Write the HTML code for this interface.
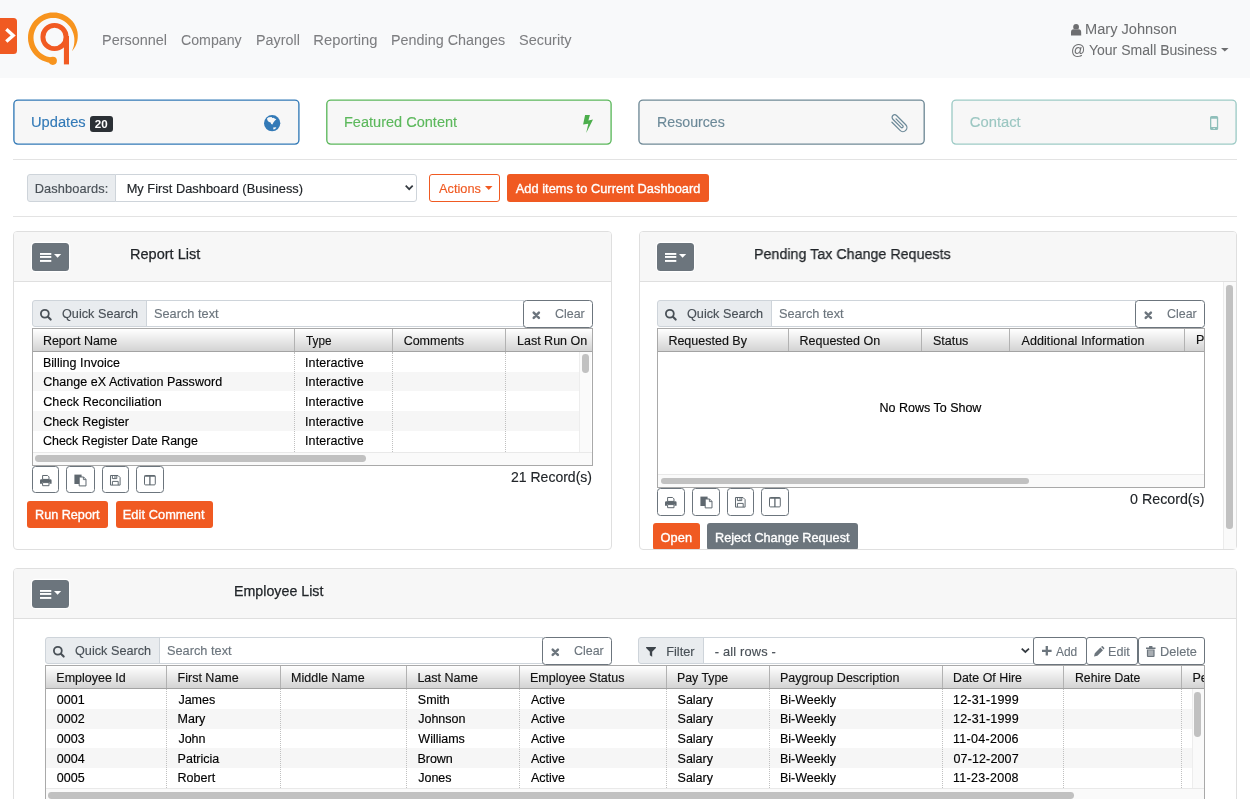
<!DOCTYPE html>
<html lang="en">
<head>
<meta charset="utf-8">
<title>Dashboard</title>
<style>
*{box-sizing:border-box;margin:0;padding:0}
html,body{width:1250px;height:799px;overflow:hidden;background:#fff}
body{font-family:"Liberation Sans",sans-serif;font-size:13px;color:#212529;position:relative}
.t{position:absolute;transform-origin:0 0;white-space:nowrap;line-height:20px;height:20px}
svg{overflow:visible}
#root{position:absolute;left:0;top:0;width:1250px;height:799px;overflow:hidden;will-change:transform}

</style>
</head>
<body>
<div id="root">
<div style="position:absolute;left:0px;top:0px;width:1250px;height:78px;background:#f8f9fa"></div>
<div style="position:absolute;left:-4px;top:18px;width:21px;height:36px;background:#f05a22;border-radius:3.5px"></div>
<svg style="position:absolute;left:0px;top:18px;" width="17" height="36" viewBox="0 18 17 36"><path d="M6.3 29.2 L13.2 35.4 L6.3 41.6" fill="none" stroke="#fff" stroke-width="3.4" stroke-linecap="butt" stroke-linejoin="miter"/></svg>
<svg style="position:absolute;left:20px;top:5px;" width="70" height="70" viewBox="20 5 70 70"><path d="M54.2 63.0 L51.1 62.9 L48.0 62.4 L45.1 61.6 L42.2 60.4 L39.5 58.9 L37.0 57.1 L34.8 55.0 L32.8 52.6 L31.2 50.0 L29.8 47.2 L28.9 44.2 L28.2 41.2 L28.0 38.1 L28.1 35.1 L28.6 32.0 L29.5 29.0 L30.8 26.2 L32.3 23.6 L34.2 21.1 L36.4 18.9 L38.8 17.0 L41.4 15.4 L44.2 14.1 L47.2 13.2 L50.2 12.6 L53.3 12.4 L56.4 12.6 L59.4 13.2 L62.4 14.1 L65.2 15.4 L67.8 17.0 L70.2 18.9 L72.3 21.1 L74.2 23.6 L75.6 26.3 L76.8 29.2 L77.5 32.1 L77.8 35.1 L77.7 38.1 L77.3 41.1 L76.4 43.9 L75.3 46.6 L73.7 49.0 L71.9 51.2 L71.9 51.2 L73.0 48.6 L73.8 46.0 L74.2 43.3 L74.4 40.7 L74.3 38.1 L73.9 35.5 L73.2 33.1 L72.3 30.8 L71.2 28.6 L69.9 26.5 L68.3 24.7 L66.6 23.0 L64.7 21.5 L62.6 20.2 L60.4 19.2 L58.1 18.5 L55.7 18.0 L53.3 17.9 L50.9 18.0 L48.5 18.5 L46.2 19.2 L44.0 20.2 L41.9 21.5 L40.1 23.0 L38.4 24.7 L36.9 26.6 L35.7 28.7 L34.7 30.9 L34.0 33.2 L33.6 35.6 L33.5 38.0 L33.7 40.5 L34.2 42.8 L34.9 45.1 L36.0 47.3 L37.3 49.3 L38.8 51.2 L40.6 52.9 L42.5 54.3 L44.6 55.5 L46.9 56.4 L49.2 57.1 L51.6 57.4 L54.0 57.5Z" fill="#f7941e"/><circle cx="52.8" cy="60.8" r="4.1" fill="#f7941e"/><circle cx="54.5" cy="37" r="11.6" fill="none" stroke="#f15a22" stroke-width="4.9"/><rect x="63.9" y="36" width="5.1" height="28.4" fill="#f15a22"/></svg>
<span class="t" style="left:101.63px;top:29px;line-height:22px;height:22px;font-size:14.75px;color:#7d7e80;transform:scaleX(0.9790);-webkit-text-stroke:0.05px #7d7e80;">Personnel</span>
<span class="t" style="left:180.68px;top:29px;line-height:22px;height:22px;font-size:14.75px;color:#7d7e80;transform:scaleX(0.9607);-webkit-text-stroke:0.05px #7d7e80;">Company</span>
<span class="t" style="left:256.03px;top:29px;line-height:22px;height:22px;font-size:14.75px;color:#7d7e80;transform:scaleX(0.9720);-webkit-text-stroke:0.05px #7d7e80;">Payroll</span>
<span class="t" style="left:313.30px;top:29px;line-height:22px;height:22px;font-size:14.75px;color:#7d7e80;letter-spacing:0.013px;-webkit-text-stroke:0.05px #7d7e80;">Reporting</span>
<span class="t" style="left:391.13px;top:29px;line-height:22px;height:22px;font-size:14.75px;color:#7d7e80;transform:scaleX(0.9727);-webkit-text-stroke:0.05px #7d7e80;">Pending Changes</span>
<span class="t" style="left:519.31px;top:29px;line-height:22px;height:22px;font-size:14.75px;color:#7d7e80;transform:scaleX(0.9838);-webkit-text-stroke:0.05px #7d7e80;">Security</span>
<span class="t" style="left:1084.81px;top:18px;line-height:22px;height:22px;font-size:14.75px;color:#6d6e70;transform:scaleX(0.9912);-webkit-text-stroke:0.05px #6d6e70;">Mary Johnson</span>
<span class="t" style="left:1070.51px;top:39px;line-height:22px;height:22px;font-size:14.75px;color:#6d6e70;transform:scaleX(0.9516);-webkit-text-stroke:0.05px #6d6e70;">@ Your Small Business</span>
<svg style="position:absolute;left:1071px;top:23.5px;" width="10.2" height="11.6" viewBox="0 0 10.2 11.6"><circle cx="5.1" cy="2.9" r="2.9" fill="#6d6e70"/><path d="M0 11.6 V8.2 Q0 5.4 2.6 5.2 Q5.1 6.6 7.6 5.2 Q10.2 5.4 10.2 8.2 V11.6 Q10.2 11.6 9 11.6 H1.2 Q0 11.6 0 11.6Z" fill="#6d6e70"/></svg>
<svg style="position:absolute;left:1220.9px;top:47.9px;" width="7.6" height="3.6" viewBox="0 0 7.6 3.6"><path d="M0 0H7.6L3.8 3.6Z" fill="#6d6e70"/></svg>
<svg style="position:absolute;left:0px;top:0px;" width="1250" height="160" viewBox="0 0 1250 160"><rect x="13.9" y="100.1" width="285.00" height="44" rx="4" fill="#f7f7f7" stroke="#337ab7" stroke-width="1.35"/></svg>
<span class="t" style="left:31.36px;top:111px;line-height:22px;height:22px;font-size:14.75px;color:#337ab7;transform:scaleX(0.9953);-webkit-text-stroke:0.15px #337ab7;">Updates</span>
<svg style="position:absolute;left:0px;top:0px;" width="1250" height="160" viewBox="0 0 1250 160"><rect x="326.8" y="100.1" width="284.30" height="44" rx="4" fill="#f7f7f7" stroke="#5cb85c" stroke-width="1.35"/></svg>
<span class="t" style="left:343.92px;top:111px;line-height:22px;height:22px;font-size:14.75px;color:#5cb85c;transform:scaleX(0.9850);-webkit-text-stroke:0.15px #5cb85c;">Featured Content</span>
<svg style="position:absolute;left:0px;top:0px;" width="1250" height="160" viewBox="0 0 1250 160"><rect x="638.95" y="100.1" width="285.25" height="44" rx="4" fill="#f7f7f7" stroke="#708a97" stroke-width="1.35"/></svg>
<span class="t" style="left:656.85px;top:111px;line-height:22px;height:22px;font-size:14.75px;color:#6c8998;transform:scaleX(0.9622);-webkit-text-stroke:0.15px #6c8998;">Resources</span>
<svg style="position:absolute;left:0px;top:0px;" width="1250" height="160" viewBox="0 0 1250 160"><rect x="952.0" y="100.1" width="284.10" height="44" rx="4" fill="#f7f7f7" stroke="#9ecbc6" stroke-width="1.35"/></svg>
<span class="t" style="left:969.85px;top:111px;line-height:22px;height:22px;font-size:14.75px;color:#9cc7c2;-webkit-text-stroke:0.15px #9cc7c2;">Contact</span>
<div style="position:absolute;left:90px;top:116px;width:23px;height:16px;background:#2b3035;border-radius:3px"></div>
<span class="t" style="left:94.70px;top:115px;line-height:18px;height:18px;font-size:11.6px;color:#fff;font-weight:700;">20</span>
<svg style="position:absolute;left:264px;top:114.8px;" width="16.3" height="16.3" viewBox="0 0 16.3 16.3"><circle cx="8.15" cy="8.15" r="8.15" fill="#337ab7"/><path d="M3 3.6 L4.6 2.3 L7.6 1.9 L8.3 3 L9.6 2.7 L10.6 3.6 L12.3 4.2 L10.8 5.8 L9.4 7.6 L8.4 9.4 L7.2 9 L6.6 7.6 L4.6 6.8 L3.4 5.2Z M9.2 12.6 L12.4 12.2 L11.2 13.9 L9.4 14.6Z" fill="#f7f7f7"/></svg>
<svg style="position:absolute;left:583px;top:114.8px;" width="10" height="18" viewBox="583 114.8 10 18"><path d="M585.1 114.9 L589.9 114.9 L588.4 120.4 L593 119.3 L586.2 132.8 L588.3 123.6 L583.1 124.2Z" fill="#4cae4c"/></svg>
<svg style="position:absolute;left:890px;top:114px;" width="17" height="18" viewBox="890 114 17 18"><g transform="rotate(-45 898.2 122.85)" fill="none" stroke="#6c8998" stroke-width="1.25" stroke-linecap="round"><path d="M894.2 118 V129.5 A4 4 0 0 0 902.2 129.5 V116.5 A2.6 2.6 0 0 0 897 116.5 V128 A1.2 1.2 0 0 0 899.5 128 V118.5"/></g></svg>
<svg style="position:absolute;left:1210px;top:116px;" width="8.2" height="14" viewBox="0 0 8.2 14"><path fill-rule="evenodd" d="M1.6 0H6.6Q8.2 0 8.2 1.6V12.4Q8.2 14 6.6 14H1.6Q0 14 0 12.4V1.6Q0 0 1.6 0Z M1.3 2.7V11H6.9V2.7Z M3.5 11.9V12.9H4.7V11.9Z" fill="#8fbfba"/></svg>
<div style="position:absolute;left:13px;top:159px;width:1224px;height:1px;background:#e3e3e3"></div>
<div style="position:absolute;left:13px;top:216px;width:1224px;height:1px;background:#e3e3e3"></div>
<div style="position:absolute;left:27px;top:174px;width:89px;height:28px;background:#e9ecef;border:1px solid #ced4da;border-radius:3px 0 0 3px"></div>
<div style="position:absolute;left:115px;top:174px;width:302px;height:28px;background:#fff;border:1px solid #ced4da;border-radius:0 3px 3px 0"></div>
<span class="t" style="left:34.75px;top:178px;line-height:21px;height:21px;font-size:12.8px;color:#495057;letter-spacing:0.105px;-webkit-text-stroke:0.15px #495057;">Dashboards:</span>
<span class="t" style="left:126.65px;top:178px;line-height:21px;height:21px;font-size:12.8px;color:#212529;letter-spacing:0.027px;-webkit-text-stroke:0.15px #212529;">My First Dashboard (Business)</span>
<svg style="position:absolute;left:404.8px;top:185.2px;" width="8.4" height="5.3" viewBox="0 0 8.4 5.3"><path d="M0.7 0.7 L4.2 4.2 L7.7 0.7" fill="none" stroke="#343a40" stroke-width="1.7"/></svg>
<div style="position:absolute;left:429px;top:174px;width:71px;height:28px;background:#fff;border:1px solid #f05a22;border-radius:3px"></div>
<span class="t" style="left:438.85px;top:178px;line-height:21px;height:21px;font-size:12.8px;color:#f05a22;transform:scaleX(0.9976);-webkit-text-stroke:0.15px #f05a22;">Actions</span>
<svg style="position:absolute;left:484.5px;top:186.1px;" width="7.5" height="3.9" viewBox="0 0 7.5 3.9"><path d="M0 0H7.5L3.75 3.9Z" fill="#f05a22"/></svg>
<div style="position:absolute;left:507px;top:174px;width:202px;height:28px;background:#f05a22;border-radius:3px"></div>
<span class="t" style="left:515.65px;top:178px;line-height:21px;height:21px;font-size:12.8px;color:#fff;letter-spacing:0.045px;-webkit-text-stroke:0.35px #fff;">Add items to Current Dashboard</span>
<div style="position:absolute;left:13px;top:231px;width:599px;height:319px;border:1px solid #dfdfdf;border-radius:4px;background:#fff"></div>
<div style="position:absolute;left:14px;top:232px;width:597px;height:50px;background:#f7f7f7;border-bottom:1px solid #dfdfdf;border-radius:3px 3px 0 0"></div>
<div style="position:absolute;left:32px;top:243px;width:37px;height:28px;background:#6c757d;border-radius:3.5px;box-shadow:0 0 0 1.2px #fff"></div>
<svg style="position:absolute;left:39.7px;top:252.9px;" width="11.3" height="2" viewBox="0 0 11.3 2"><rect width="11.3" height="1.9" fill="#fff"/></svg>
<svg style="position:absolute;left:39.7px;top:256.3px;" width="11.3" height="2" viewBox="0 0 11.3 2"><rect width="11.3" height="1.9" fill="#fff"/></svg>
<svg style="position:absolute;left:39.7px;top:260px;" width="11.3" height="2" viewBox="0 0 11.3 2"><rect width="11.3" height="1.9" fill="#fff"/></svg>
<svg style="position:absolute;left:54.3px;top:254.2px;" width="7.2" height="3.8" viewBox="0 0 7.2 3.8"><path d="M0 0H7.2L3.6 3.8Z" fill="#fff"/></svg>
<span class="t" style="left:129.52px;top:242px;line-height:23px;height:23px;font-size:15.4px;color:#212529;transform:scaleX(0.9439);-webkit-text-stroke:0.25px #212529;">Report List</span>
<div style="position:absolute;left:32px;top:300px;width:115px;height:27px;background:#e9ecef;border:1px solid #ced4da;border-radius:3px 0 0 3px"></div>
<div style="position:absolute;left:146px;top:300px;width:378px;height:27px;background:#fff;border:1px solid #ced4da"></div>
<svg style="position:absolute;left:39.9px;top:309.1px;" width="11.6" height="11.6" viewBox="0 0 11.6 11.6"><circle cx="4.85" cy="4.75" r="3.95" fill="none" stroke="#495057" stroke-width="1.8"/><path d="M7.9 7.8 L10.7 10.6" stroke="#495057" stroke-width="2.1" stroke-linecap="round"/></svg>
<span class="t" style="left:61.81px;top:303px;line-height:21px;height:21px;font-size:12.8px;color:#495057;transform:scaleX(0.9907);-webkit-text-stroke:0.15px #495057;">Quick Search</span>
<span class="t" style="left:153.50px;top:303px;line-height:21px;height:21px;font-size:12.8px;color:#6c757d;transform:scaleX(0.9977);-webkit-text-stroke:0.15px #6c757d;">Search text</span>
<div style="position:absolute;left:523px;top:300px;width:70px;height:28px;background:#fff;border:1px solid #6c757d;border-radius:3.5px"></div>
<svg style="position:absolute;left:531.7px;top:310.5px;" width="8.6" height="8.6" viewBox="0 0 8.6 8.6"><path d="M1.7 1.7 L6.9 6.9 M6.9 1.7 L1.7 6.9" stroke="#6c757d" stroke-width="2.5" stroke-linecap="round"/></svg>
<span class="t" style="left:554.67px;top:303px;line-height:21px;height:21px;font-size:12.8px;color:#6c757d;transform:scaleX(0.9714);-webkit-text-stroke:0.15px #6c757d;">Clear</span>
<div style="position:absolute;left:32px;top:328px;width:561px;height:138px;border:1px solid #a9a9a9;background:#fff;overflow:hidden">
<div style="position:absolute;left:0;top:0;right:0;height:23px;background:linear-gradient(#fff,#d3d3d3);border-bottom:1px solid #a3a3a3"></div>
<div style="position:absolute;left:261px;top:0;width:1px;height:22px;background:#b2b2b2"></div>
<div style="position:absolute;left:359px;top:0;width:1px;height:22px;background:#b2b2b2"></div>
<div style="position:absolute;left:472px;top:0;width:1px;height:22px;background:#b2b2b2"></div>
</div>
<span class="t" style="left:42.90px;top:331px;line-height:20px;height:20px;font-size:12.5px;color:#111;-webkit-text-stroke:0.15px #111;">Report Name</span>
<span class="t" style="left:306.02px;top:331px;line-height:20px;height:20px;font-size:12.5px;color:#111;transform:scaleX(0.9410);-webkit-text-stroke:0.15px #111;">Type</span>
<span class="t" style="left:403.65px;top:331px;line-height:20px;height:20px;font-size:12.5px;color:#111;-webkit-text-stroke:0.15px #111;">Comments</span>
<span class="t" style="left:517.00px;top:331px;line-height:20px;height:20px;font-size:12.5px;color:#111;-webkit-text-stroke:0.15px #111;">Last Run On</span>
<div style="position:absolute;left:33px;top:372px;width:546px;height:19px;background:#f6f6f6"></div>
<div style="position:absolute;left:33px;top:411px;width:546px;height:20px;background:#f6f6f6"></div>
<div style="position:absolute;left:294px;top:352px;width:0px;height:100px;border-left:1px dotted #c0c0c0"></div>
<div style="position:absolute;left:392px;top:352px;width:0px;height:100px;border-left:1px dotted #c0c0c0"></div>
<div style="position:absolute;left:505px;top:352px;width:0px;height:100px;border-left:1px dotted #c0c0c0"></div>
<span class="t" style="left:42.90px;top:353px;line-height:20px;height:20px;font-size:12.5px;color:#000;letter-spacing:0.050px;-webkit-text-stroke:0.15px #000;">Billing Invoice</span>
<span class="t" style="left:305.05px;top:353px;line-height:20px;height:20px;font-size:12.5px;color:#000;letter-spacing:0.095px;-webkit-text-stroke:0.15px #000;">Interactive</span>
<span class="t" style="left:43.25px;top:372px;line-height:20px;height:20px;font-size:12.5px;color:#000;letter-spacing:0.034px;-webkit-text-stroke:0.15px #000;">Change eX Activation Password</span>
<span class="t" style="left:305.05px;top:372px;line-height:20px;height:20px;font-size:12.5px;color:#000;letter-spacing:0.095px;-webkit-text-stroke:0.15px #000;">Interactive</span>
<span class="t" style="left:43.25px;top:392px;line-height:20px;height:20px;font-size:12.5px;color:#000;letter-spacing:0.087px;-webkit-text-stroke:0.15px #000;">Check Reconciliation</span>
<span class="t" style="left:305.05px;top:392px;line-height:20px;height:20px;font-size:12.5px;color:#000;letter-spacing:0.095px;-webkit-text-stroke:0.15px #000;">Interactive</span>
<span class="t" style="left:43.25px;top:412px;line-height:20px;height:20px;font-size:12.5px;color:#000;letter-spacing:0.008px;-webkit-text-stroke:0.15px #000;">Check Register</span>
<span class="t" style="left:305.05px;top:412px;line-height:20px;height:20px;font-size:12.5px;color:#000;letter-spacing:0.095px;-webkit-text-stroke:0.15px #000;">Interactive</span>
<span class="t" style="left:43.25px;top:431px;line-height:20px;height:20px;font-size:12.5px;color:#000;transform:scaleX(0.9951);-webkit-text-stroke:0.15px #000;">Check Register Date Range</span>
<span class="t" style="left:305.05px;top:431px;line-height:20px;height:20px;font-size:12.5px;color:#000;letter-spacing:0.095px;-webkit-text-stroke:0.15px #000;">Interactive</span>
<div style="position:absolute;left:579px;top:352px;width:12px;height:100px;background:#fafafa;border-left:1px solid #ededed"></div>
<div style="position:absolute;left:582px;top:354px;width:7px;height:19px;background:#c1c1c1;border-radius:3.4px"></div>
<div style="position:absolute;left:33px;top:452px;width:559px;height:13px;background:#fafafa;border-top:1px solid #e9e9e9"></div>
<div style="position:absolute;left:35px;top:455px;width:331px;height:7px;background:#c1c1c1;border-radius:3.4px"></div>
<span class="t" style="left:511.29px;top:466px;line-height:22px;height:22px;font-size:14.75px;color:#212529;transform:scaleX(0.9498);-webkit-text-stroke:0.15px #212529;">21 Record(s)</span>
<div style="position:absolute;left:32px;top:466px;width:27px;height:27px;border:1px solid #6c757d;border-radius:3.5px;background:#fff"></div>
<div style="position:absolute;left:66px;top:466px;width:29px;height:27px;border:1px solid #6c757d;border-radius:3.5px;background:#fff"></div>
<div style="position:absolute;left:102px;top:466px;width:27px;height:27px;border:1px solid #6c757d;border-radius:3.5px;background:#fff"></div>
<div style="position:absolute;left:136px;top:466px;width:28px;height:27px;border:1px solid #6c757d;border-radius:3.5px;background:#fff"></div>
<svg style="position:absolute;left:39.9px;top:474.6px;" width="11.6" height="11.2" viewBox="0 0 11.6 11.2"><path d="M2.6 0.5H7.6L9 1.9V4.4H2.6Z M2.6 7.6H9V10.7H2.6Z" fill="#fff" stroke="#5f686f" stroke-width="1"/><path d="M1.2 4.2H10.4Q11.6 4.2 11.6 5.4V8.8H9.4V7.2H2.2V8.8H0V5.4Q0 4.2 1.2 4.2Z" fill="#5f686f"/></svg>
<svg style="position:absolute;left:73.8px;top:474.0px;" width="12.6" height="12.4" viewBox="0 0 12.6 12.4"><path d="M0.4 0.6H7.6V10H0.4Z" fill="#5f686f"/><path d="M5.2 3H9.6L12 5.4V11.9H5.2Z" fill="#fff" stroke="#5f686f" stroke-width="1"/><path d="M9.4 3V5.6H12" fill="none" stroke="#5f686f" stroke-width=".9"/></svg>
<svg style="position:absolute;left:109.9px;top:474.7px;" width="10.6" height="10.6" viewBox="0 0 10.6 10.6"><path d="M0.5 0.5H8L10.1 2.6V10.1H0.5Z" fill="#fff" stroke="#5f686f" stroke-width="1"/><path d="M2.4 0.5V3.6H6.8V0.5 M5 1V3.2 M2.4 10.1V6.4H8.2V10.1" fill="none" stroke="#5f686f" stroke-width="1"/></svg>
<svg style="position:absolute;left:143.8px;top:475.2px;" width="11.8" height="10.4" viewBox="0 0 11.8 10.4"><rect x="0.5" y="0.5" width="10.8" height="9.4" rx="1" fill="#fff" stroke="#5f686f" stroke-width="1"/><path d="M0.5 1.2H11.3 M5.9 1V9.9" stroke="#5f686f" stroke-width="1.3" fill="none"/></svg>
<div style="position:absolute;left:27px;top:501px;width:81px;height:27px;background:#f05a22;border-radius:3px"></div>
<span class="t" style="left:34.86px;top:504px;line-height:21px;height:21px;font-size:12.8px;color:#fff;transform:scaleX(0.9876);-webkit-text-stroke:0.35px #fff;">Run Report</span>
<div style="position:absolute;left:116px;top:501px;width:97px;height:27px;background:#f05a22;border-radius:3px"></div>
<span class="t" style="left:122.75px;top:504px;line-height:21px;height:21px;font-size:12.8px;color:#fff;letter-spacing:0.059px;-webkit-text-stroke:0.35px #fff;">Edit Comment</span>
<div style="position:absolute;left:639px;top:231px;width:598px;height:319px;border:1px solid #dfdfdf;border-radius:4px;background:#fff"></div>
<div style="position:absolute;left:640px;top:232px;width:596px;height:50px;background:#f7f7f7;border-bottom:1px solid #dfdfdf;border-radius:3px 3px 0 0"></div>
<div style="position:absolute;left:657px;top:243px;width:37px;height:28px;background:#6c757d;border-radius:3.5px;box-shadow:0 0 0 1.2px #fff"></div>
<svg style="position:absolute;left:664.7px;top:252.9px;" width="11.3" height="2" viewBox="0 0 11.3 2"><rect width="11.3" height="1.9" fill="#fff"/></svg>
<svg style="position:absolute;left:664.7px;top:256.3px;" width="11.3" height="2" viewBox="0 0 11.3 2"><rect width="11.3" height="1.9" fill="#fff"/></svg>
<svg style="position:absolute;left:664.7px;top:260px;" width="11.3" height="2" viewBox="0 0 11.3 2"><rect width="11.3" height="1.9" fill="#fff"/></svg>
<svg style="position:absolute;left:679.3px;top:254.2px;" width="7.2" height="3.8" viewBox="0 0 7.2 3.8"><path d="M0 0H7.2L3.6 3.8Z" fill="#fff"/></svg>
<span class="t" style="left:754.44px;top:242px;line-height:23px;height:23px;font-size:15.4px;color:#212529;transform:scaleX(0.9279);-webkit-text-stroke:0.25px #212529;">Pending Tax Change Requests</span>
<div style="position:absolute;left:1223px;top:282px;width:13px;height:267px;background:#fafafa;border-left:1px solid #ececec"></div>
<div style="position:absolute;left:1226px;top:285px;width:7px;height:244px;background:#c1c1c1;border-radius:3.2px"></div>
<div style="position:absolute;left:657px;top:300px;width:115px;height:27px;background:#e9ecef;border:1px solid #ced4da;border-radius:3px 0 0 3px"></div>
<div style="position:absolute;left:771px;top:300px;width:365px;height:27px;background:#fff;border:1px solid #ced4da"></div>
<svg style="position:absolute;left:664.9px;top:309.1px;" width="11.6" height="11.6" viewBox="0 0 11.6 11.6"><circle cx="4.85" cy="4.75" r="3.95" fill="none" stroke="#495057" stroke-width="1.8"/><path d="M7.9 7.8 L10.7 10.6" stroke="#495057" stroke-width="2.1" stroke-linecap="round"/></svg>
<span class="t" style="left:686.81px;top:303px;line-height:21px;height:21px;font-size:12.8px;color:#495057;transform:scaleX(0.9907);-webkit-text-stroke:0.15px #495057;">Quick Search</span>
<span class="t" style="left:778.50px;top:303px;line-height:21px;height:21px;font-size:12.8px;color:#6c757d;transform:scaleX(0.9977);-webkit-text-stroke:0.15px #6c757d;">Search text</span>
<div style="position:absolute;left:1135px;top:300px;width:70px;height:28px;background:#fff;border:1px solid #6c757d;border-radius:3.5px"></div>
<svg style="position:absolute;left:1143.7px;top:310.5px;" width="8.6" height="8.6" viewBox="0 0 8.6 8.6"><path d="M1.7 1.7 L6.9 6.9 M6.9 1.7 L1.7 6.9" stroke="#6c757d" stroke-width="2.5" stroke-linecap="round"/></svg>
<span class="t" style="left:1166.67px;top:303px;line-height:21px;height:21px;font-size:12.8px;color:#6c757d;transform:scaleX(0.9714);-webkit-text-stroke:0.15px #6c757d;">Clear</span>
<div style="position:absolute;left:657px;top:328px;width:548px;height:160px;border:1px solid #a9a9a9;background:#fff;overflow:hidden">
<div style="position:absolute;left:0;top:0;right:0;height:23px;background:linear-gradient(#fff,#d3d3d3);border-bottom:1px solid #a3a3a3"></div>
<div style="position:absolute;left:130px;top:0;width:1px;height:22px;background:#b2b2b2"></div>
<div style="position:absolute;left:263px;top:0;width:1px;height:22px;background:#b2b2b2"></div>
<div style="position:absolute;left:351px;top:0;width:1px;height:22px;background:#b2b2b2"></div>
<div style="position:absolute;left:526px;top:0;width:1px;height:22px;background:#b2b2b2"></div>
</div>
<span class="t" style="left:668.40px;top:331px;line-height:20px;height:20px;font-size:12.5px;color:#111;-webkit-text-stroke:0.15px #111;">Requested By</span>
<span class="t" style="left:799.50px;top:331px;line-height:20px;height:20px;font-size:12.5px;color:#111;-webkit-text-stroke:0.15px #111;">Requested On</span>
<span class="t" style="left:932.95px;top:331px;line-height:20px;height:20px;font-size:12.5px;color:#111;-webkit-text-stroke:0.15px #111;">Status</span>
<span class="t" style="left:1021.45px;top:331px;line-height:20px;height:20px;font-size:12.5px;color:#111;letter-spacing:0.102px;-webkit-text-stroke:0.15px #111;">Additional Information</span>
<div style="position:absolute;left:0;top:0;width:1203.5px;height:799px;overflow:hidden"><span class="t" style="left:1195.90px;top:330px;line-height:20px;height:20px;font-size:12.5px;color:#111;-webkit-text-stroke:0.15px #111;">P</span></div>
<span class="t" style="left:879.50px;top:398px;line-height:20px;height:20px;font-size:12.5px;color:#000;-webkit-text-stroke:0.15px #000;">No Rows To Show</span>
<div style="position:absolute;left:658px;top:474px;width:546px;height:13px;background:#fafafa;border-top:1px solid #e9e9e9"></div>
<div style="position:absolute;left:661px;top:478px;width:368px;height:6px;background:#c1c1c1;border-radius:3.4px"></div>
<div style="position:absolute;left:657px;top:488px;width:28px;height:28px;border:1px solid #6c757d;border-radius:3.5px;background:#fff"></div>
<div style="position:absolute;left:692px;top:488px;width:28px;height:28px;border:1px solid #6c757d;border-radius:3.5px;background:#fff"></div>
<div style="position:absolute;left:727px;top:488px;width:27px;height:28px;border:1px solid #6c757d;border-radius:3.5px;background:#fff"></div>
<div style="position:absolute;left:761px;top:488px;width:28px;height:28px;border:1px solid #6c757d;border-radius:3.5px;background:#fff"></div>
<svg style="position:absolute;left:664.9px;top:496.8px;" width="11.6" height="11.2" viewBox="0 0 11.6 11.2"><path d="M2.6 0.5H7.6L9 1.9V4.4H2.6Z M2.6 7.6H9V10.7H2.6Z" fill="#fff" stroke="#5f686f" stroke-width="1"/><path d="M1.2 4.2H10.4Q11.6 4.2 11.6 5.4V8.8H9.4V7.2H2.2V8.8H0V5.4Q0 4.2 1.2 4.2Z" fill="#5f686f"/></svg>
<svg style="position:absolute;left:699.8px;top:496.2px;" width="12.6" height="12.4" viewBox="0 0 12.6 12.4"><path d="M0.4 0.6H7.6V10H0.4Z" fill="#5f686f"/><path d="M5.2 3H9.6L12 5.4V11.9H5.2Z" fill="#fff" stroke="#5f686f" stroke-width="1"/><path d="M9.4 3V5.6H12" fill="none" stroke="#5f686f" stroke-width=".9"/></svg>
<svg style="position:absolute;left:735.1999999999999px;top:496.9px;" width="10.6" height="10.6" viewBox="0 0 10.6 10.6"><path d="M0.5 0.5H8L10.1 2.6V10.1H0.5Z" fill="#fff" stroke="#5f686f" stroke-width="1"/><path d="M2.4 0.5V3.6H6.8V0.5 M5 1V3.2 M2.4 10.1V6.4H8.2V10.1" fill="none" stroke="#5f686f" stroke-width="1"/></svg>
<svg style="position:absolute;left:769.0999999999999px;top:497.4px;" width="11.8" height="10.4" viewBox="0 0 11.8 10.4"><rect x="0.5" y="0.5" width="10.8" height="9.4" rx="1" fill="#fff" stroke="#5f686f" stroke-width="1"/><path d="M0.5 1.2H11.3 M5.9 1V9.9" stroke="#5f686f" stroke-width="1.3" fill="none"/></svg>
<span class="t" style="left:1129.67px;top:488px;line-height:22px;height:22px;font-size:14.75px;color:#212529;transform:scaleX(0.9669);-webkit-text-stroke:0.15px #212529;">0 Record(s)</span>
<div style="position:absolute;left:640px;top:500px;width:583px;height:49.3px;overflow:hidden"><div style="position:absolute;left:-640px;top:-500px">
<div style="position:absolute;left:653px;top:523px;width:47px;height:27px;background:#f05a22;border-radius:3px"></div>
<span class="t" style="left:660.60px;top:527px;line-height:21px;height:21px;font-size:12.8px;color:#fff;letter-spacing:0.033px;-webkit-text-stroke:0.35px #fff;">Open</span>
<div style="position:absolute;left:707px;top:523px;width:151px;height:27px;background:#6c757d;border-radius:3px"></div>
<span class="t" style="left:714.56px;top:527px;line-height:21px;height:21px;font-size:12.8px;color:#fff;transform:scaleX(0.9900);-webkit-text-stroke:0.35px #fff;">Reject Change Request</span>
</div></div>
<div style="position:absolute;left:13px;top:568px;width:1224px;height:260px;border:1px solid #dfdfdf;border-radius:4px;background:#fff"></div>
<div style="position:absolute;left:14px;top:569px;width:1222px;height:50px;background:#f7f7f7;border-bottom:1px solid #dfdfdf;border-radius:3px 3px 0 0"></div>
<div style="position:absolute;left:32px;top:580px;width:37px;height:28px;background:#6c757d;border-radius:3.5px;box-shadow:0 0 0 1.2px #fff"></div>
<svg style="position:absolute;left:39.7px;top:589.9px;" width="11.3" height="2" viewBox="0 0 11.3 2"><rect width="11.3" height="1.9" fill="#fff"/></svg>
<svg style="position:absolute;left:39.7px;top:593.3px;" width="11.3" height="2" viewBox="0 0 11.3 2"><rect width="11.3" height="1.9" fill="#fff"/></svg>
<svg style="position:absolute;left:39.7px;top:597px;" width="11.3" height="2" viewBox="0 0 11.3 2"><rect width="11.3" height="1.9" fill="#fff"/></svg>
<svg style="position:absolute;left:54.3px;top:591.2px;" width="7.2" height="3.8" viewBox="0 0 7.2 3.8"><path d="M0 0H7.2L3.6 3.8Z" fill="#fff"/></svg>
<span class="t" style="left:233.74px;top:579px;line-height:23px;height:23px;font-size:15.4px;color:#212529;transform:scaleX(0.9250);-webkit-text-stroke:0.25px #212529;">Employee List</span>
<div style="position:absolute;left:45px;top:637px;width:115px;height:27px;background:#e9ecef;border:1px solid #ced4da;border-radius:3px 0 0 3px"></div>
<div style="position:absolute;left:159px;top:637px;width:384px;height:27px;background:#fff;border:1px solid #ced4da"></div>
<svg style="position:absolute;left:52.9px;top:646.1px;" width="11.6" height="11.6" viewBox="0 0 11.6 11.6"><circle cx="4.85" cy="4.75" r="3.95" fill="none" stroke="#495057" stroke-width="1.8"/><path d="M7.9 7.8 L10.7 10.6" stroke="#495057" stroke-width="2.1" stroke-linecap="round"/></svg>
<span class="t" style="left:74.81px;top:640px;line-height:21px;height:21px;font-size:12.8px;color:#495057;transform:scaleX(0.9907);-webkit-text-stroke:0.15px #495057;">Quick Search</span>
<span class="t" style="left:166.50px;top:640px;line-height:21px;height:21px;font-size:12.8px;color:#6c757d;transform:scaleX(0.9977);-webkit-text-stroke:0.15px #6c757d;">Search text</span>
<div style="position:absolute;left:542px;top:637px;width:70px;height:28px;background:#fff;border:1px solid #6c757d;border-radius:3.5px"></div>
<svg style="position:absolute;left:550.7px;top:647.5px;" width="8.6" height="8.6" viewBox="0 0 8.6 8.6"><path d="M1.7 1.7 L6.9 6.9 M6.9 1.7 L1.7 6.9" stroke="#6c757d" stroke-width="2.5" stroke-linecap="round"/></svg>
<span class="t" style="left:573.67px;top:640px;line-height:21px;height:21px;font-size:12.8px;color:#6c757d;transform:scaleX(0.9714);-webkit-text-stroke:0.15px #6c757d;">Clear</span>
<div style="position:absolute;left:638px;top:637px;width:66px;height:27px;background:#e9ecef;border:1px solid #ced4da;border-radius:3px 0 0 3px"></div>
<div style="position:absolute;left:703px;top:637px;width:331px;height:27px;background:#fff;border:1px solid #ced4da"></div>
<svg style="position:absolute;left:646.4px;top:646.9px;" width="10" height="9.8" viewBox="0 0 10 10"><path d="M0 0H10V1L6.2 4.9V10L3.8 8.3V4.9L0 1Z" fill="#3d444b"/></svg>
<span class="t" style="left:666.15px;top:641px;line-height:21px;height:21px;font-size:12.8px;color:#495057;-webkit-text-stroke:0.15px #495057;">Filter</span>
<span class="t" style="left:714.85px;top:641px;line-height:21px;height:21px;font-size:12.8px;color:#495057;letter-spacing:0.173px;-webkit-text-stroke:0.15px #495057;">- all rows -</span>
<svg style="position:absolute;left:1021.4px;top:648.3px;" width="8.7" height="4.9" viewBox="0 0 8.7 4.9"><path d="M0.7 0.6 L4.35 4 L8 0.6" fill="none" stroke="#343a40" stroke-width="1.7"/></svg>
<div style="position:absolute;left:1033px;top:637px;width:54px;height:28px;background:#fff;border:1px solid #6c757d;border-radius:3px"></div>
<div style="position:absolute;left:1086px;top:637px;width:52px;height:28px;background:#fff;border:1px solid #6c757d;border-radius:3px"></div>
<div style="position:absolute;left:1138px;top:637px;width:67px;height:28px;background:#fff;border:1px solid #6c757d;border-radius:3px"></div>
<svg style="position:absolute;left:1041.9px;top:646px;" width="9.6" height="9.6" viewBox="0 0 9.6 9.6"><path d="M4.8 0V9.6M0 4.8H9.6" stroke="#6c757d" stroke-width="2.3"/></svg>
<span class="t" style="left:1056.25px;top:641px;line-height:21px;height:21px;font-size:12.8px;color:#6c757d;transform:scaleX(0.9315);-webkit-text-stroke:0.15px #6c757d;">Add</span>
<svg style="position:absolute;left:1094.2px;top:646.1px;" width="10.4" height="10.6" viewBox="0 0 10.4 10.6"><path d="M0 10.6 L0.8 7.2 L6.4 1.6 L9 4.2 L3.4 9.8Z M7.1 0.9 L7.8 0.2 Q8.3 -0.2 8.8 0.3 L10.2 1.7 Q10.6 2.2 10.2 2.7 L9.7 3.5Z" fill="#6c757d"/></svg>
<span class="t" style="left:1108.07px;top:641px;line-height:21px;height:21px;font-size:12.8px;color:#6c757d;transform:scaleX(0.9856);-webkit-text-stroke:0.15px #6c757d;">Edit</span>
<svg style="position:absolute;left:1146.1px;top:645.6px;" width="9.5" height="11" viewBox="0 0 9.5 11"><path d="M0 1.5H3V0.5Q3 0 3.5 0H6Q6.5 0 6.5 0.5V1.5H9.5V3H0Z M0.9 3.5H8.6V10Q8.6 11 7.6 11H1.9Q0.9 11 0.9 10Z" fill="#6c757d"/><rect x="2.1" y="4.3" width="5.3" height="5.6" fill="#a9aeb3"/></svg>
<span class="t" style="left:1159.75px;top:641px;line-height:21px;height:21px;font-size:12.8px;color:#6c757d;transform:scaleX(0.9972);-webkit-text-stroke:0.15px #6c757d;">Delete</span>
<div style="position:absolute;left:45px;top:665px;width:1160px;height:150px;border:1px solid #a9a9a9;background:#fff;overflow:hidden">
<div style="position:absolute;left:0;top:0;right:0;height:23px;background:linear-gradient(#fff,#d3d3d3);border-bottom:1px solid #a3a3a3"></div>
<div style="position:absolute;left:120px;top:0;width:1px;height:22px;background:#b2b2b2"></div>
<div style="position:absolute;left:234px;top:0;width:1px;height:22px;background:#b2b2b2"></div>
<div style="position:absolute;left:360px;top:0;width:1px;height:22px;background:#b2b2b2"></div>
<div style="position:absolute;left:473px;top:0;width:1px;height:22px;background:#b2b2b2"></div>
<div style="position:absolute;left:620px;top:0;width:1px;height:22px;background:#b2b2b2"></div>
<div style="position:absolute;left:723px;top:0;width:1px;height:22px;background:#b2b2b2"></div>
<div style="position:absolute;left:896px;top:0;width:1px;height:22px;background:#b2b2b2"></div>
<div style="position:absolute;left:1017px;top:0;width:1px;height:22px;background:#b2b2b2"></div>
<div style="position:absolute;left:1135px;top:0;width:1px;height:22px;background:#b2b2b2"></div>
</div>
<span class="t" style="left:56.30px;top:668px;line-height:20px;height:20px;font-size:12.5px;color:#111;-webkit-text-stroke:0.15px #111;">Employee Id</span>
<span class="t" style="left:177.60px;top:668px;line-height:20px;height:20px;font-size:12.5px;color:#111;-webkit-text-stroke:0.15px #111;">First Name</span>
<span class="t" style="left:291.10px;top:668px;line-height:20px;height:20px;font-size:12.5px;color:#111;-webkit-text-stroke:0.15px #111;">Middle Name</span>
<span class="t" style="left:417.40px;top:668px;line-height:20px;height:20px;font-size:12.5px;color:#111;-webkit-text-stroke:0.15px #111;">Last Name</span>
<span class="t" style="left:530.00px;top:668px;line-height:20px;height:20px;font-size:12.5px;color:#111;-webkit-text-stroke:0.15px #111;">Employee Status</span>
<span class="t" style="left:677.11px;top:668px;line-height:20px;height:20px;font-size:12.5px;color:#111;transform:scaleX(0.9871);-webkit-text-stroke:0.15px #111;">Pay Type</span>
<span class="t" style="left:779.90px;top:668px;line-height:20px;height:20px;font-size:12.5px;color:#111;-webkit-text-stroke:0.15px #111;">Paygroup Description</span>
<span class="t" style="left:953.01px;top:668px;line-height:20px;height:20px;font-size:12.5px;color:#111;transform:scaleX(0.9926);-webkit-text-stroke:0.15px #111;">Date Of Hire</span>
<span class="t" style="left:1074.62px;top:668px;line-height:20px;height:20px;font-size:12.5px;color:#111;transform:scaleX(0.9793);-webkit-text-stroke:0.15px #111;">Rehire Date</span>
<div style="position:absolute;left:0;top:0;width:1203.6px;height:799px;overflow:hidden"><span class="t" style="left:1192.40px;top:668px;line-height:20px;height:20px;font-size:12.5px;color:#111;-webkit-text-stroke:0.15px #111;">Pe</span></div>
<div style="position:absolute;left:46px;top:709px;width:1146px;height:20px;background:#f6f6f6"></div>
<div style="position:absolute;left:46px;top:748px;width:1146px;height:20px;background:#f6f6f6"></div>
<div style="position:absolute;left:166px;top:689px;width:0px;height:99px;border-left:1px dotted #c0c0c0"></div>
<div style="position:absolute;left:280px;top:689px;width:0px;height:99px;border-left:1px dotted #c0c0c0"></div>
<div style="position:absolute;left:406px;top:689px;width:0px;height:99px;border-left:1px dotted #c0c0c0"></div>
<div style="position:absolute;left:519px;top:689px;width:0px;height:99px;border-left:1px dotted #c0c0c0"></div>
<div style="position:absolute;left:666px;top:689px;width:0px;height:99px;border-left:1px dotted #c0c0c0"></div>
<div style="position:absolute;left:769px;top:689px;width:0px;height:99px;border-left:1px dotted #c0c0c0"></div>
<div style="position:absolute;left:942px;top:689px;width:0px;height:99px;border-left:1px dotted #c0c0c0"></div>
<div style="position:absolute;left:1063px;top:689px;width:0px;height:99px;border-left:1px dotted #c0c0c0"></div>
<div style="position:absolute;left:1181px;top:689px;width:0px;height:99px;border-left:1px dotted #c0c0c0"></div>
<span class="t" style="left:56.80px;top:690px;line-height:20px;height:20px;font-size:12.5px;color:#000;-webkit-text-stroke:0.15px #000;">0001</span>
<span class="t" style="left:178.40px;top:690px;line-height:20px;height:20px;font-size:12.5px;color:#000;-webkit-text-stroke:0.15px #000;">James</span>
<span class="t" style="left:417.85px;top:690px;line-height:20px;height:20px;font-size:12.5px;color:#000;-webkit-text-stroke:0.15px #000;">Smith</span>
<span class="t" style="left:530.95px;top:690px;line-height:20px;height:20px;font-size:12.5px;color:#000;-webkit-text-stroke:0.15px #000;">Active</span>
<span class="t" style="left:677.55px;top:690px;line-height:20px;height:20px;font-size:12.5px;color:#000;-webkit-text-stroke:0.15px #000;">Salary</span>
<span class="t" style="left:779.90px;top:690px;line-height:20px;height:20px;font-size:12.5px;color:#000;-webkit-text-stroke:0.15px #000;">Bi-Weekly</span>
<span class="t" style="left:953.05px;top:690px;line-height:20px;height:20px;font-size:12.5px;color:#000;letter-spacing:0.178px;-webkit-text-stroke:0.15px #000;">12-31-1999</span>
<span class="t" style="left:56.80px;top:709px;line-height:20px;height:20px;font-size:12.5px;color:#000;-webkit-text-stroke:0.15px #000;">0002</span>
<span class="t" style="left:177.60px;top:709px;line-height:20px;height:20px;font-size:12.5px;color:#000;-webkit-text-stroke:0.15px #000;">Mary</span>
<span class="t" style="left:418.20px;top:709px;line-height:20px;height:20px;font-size:12.5px;color:#000;-webkit-text-stroke:0.15px #000;">Johnson</span>
<span class="t" style="left:530.95px;top:709px;line-height:20px;height:20px;font-size:12.5px;color:#000;-webkit-text-stroke:0.15px #000;">Active</span>
<span class="t" style="left:677.55px;top:709px;line-height:20px;height:20px;font-size:12.5px;color:#000;-webkit-text-stroke:0.15px #000;">Salary</span>
<span class="t" style="left:779.90px;top:709px;line-height:20px;height:20px;font-size:12.5px;color:#000;-webkit-text-stroke:0.15px #000;">Bi-Weekly</span>
<span class="t" style="left:953.05px;top:709px;line-height:20px;height:20px;font-size:12.5px;color:#000;letter-spacing:0.178px;-webkit-text-stroke:0.15px #000;">12-31-1999</span>
<span class="t" style="left:56.80px;top:729px;line-height:20px;height:20px;font-size:12.5px;color:#000;-webkit-text-stroke:0.15px #000;">0003</span>
<span class="t" style="left:178.40px;top:729px;line-height:20px;height:20px;font-size:12.5px;color:#000;-webkit-text-stroke:0.15px #000;">John</span>
<span class="t" style="left:418.35px;top:729px;line-height:20px;height:20px;font-size:12.5px;color:#000;-webkit-text-stroke:0.15px #000;">Williams</span>
<span class="t" style="left:530.95px;top:729px;line-height:20px;height:20px;font-size:12.5px;color:#000;-webkit-text-stroke:0.15px #000;">Active</span>
<span class="t" style="left:677.55px;top:729px;line-height:20px;height:20px;font-size:12.5px;color:#000;-webkit-text-stroke:0.15px #000;">Salary</span>
<span class="t" style="left:779.90px;top:729px;line-height:20px;height:20px;font-size:12.5px;color:#000;-webkit-text-stroke:0.15px #000;">Bi-Weekly</span>
<span class="t" style="left:953.05px;top:729px;line-height:20px;height:20px;font-size:12.5px;color:#000;letter-spacing:0.278px;-webkit-text-stroke:0.15px #000;">11-04-2006</span>
<span class="t" style="left:56.80px;top:749px;line-height:20px;height:20px;font-size:12.5px;color:#000;-webkit-text-stroke:0.15px #000;">0004</span>
<span class="t" style="left:177.60px;top:749px;line-height:20px;height:20px;font-size:12.5px;color:#000;-webkit-text-stroke:0.15px #000;">Patricia</span>
<span class="t" style="left:417.40px;top:749px;line-height:20px;height:20px;font-size:12.5px;color:#000;-webkit-text-stroke:0.15px #000;">Brown</span>
<span class="t" style="left:530.95px;top:749px;line-height:20px;height:20px;font-size:12.5px;color:#000;-webkit-text-stroke:0.15px #000;">Active</span>
<span class="t" style="left:677.55px;top:749px;line-height:20px;height:20px;font-size:12.5px;color:#000;-webkit-text-stroke:0.15px #000;">Salary</span>
<span class="t" style="left:779.90px;top:749px;line-height:20px;height:20px;font-size:12.5px;color:#000;-webkit-text-stroke:0.15px #000;">Bi-Weekly</span>
<span class="t" style="left:953.50px;top:749px;line-height:20px;height:20px;font-size:12.5px;color:#000;letter-spacing:0.128px;-webkit-text-stroke:0.15px #000;">07-12-2007</span>
<span class="t" style="left:56.80px;top:768px;line-height:20px;height:20px;font-size:12.5px;color:#000;-webkit-text-stroke:0.15px #000;">0005</span>
<span class="t" style="left:177.60px;top:768px;line-height:20px;height:20px;font-size:12.5px;color:#000;-webkit-text-stroke:0.15px #000;">Robert</span>
<span class="t" style="left:418.20px;top:768px;line-height:20px;height:20px;font-size:12.5px;color:#000;-webkit-text-stroke:0.15px #000;">Jones</span>
<span class="t" style="left:530.95px;top:768px;line-height:20px;height:20px;font-size:12.5px;color:#000;-webkit-text-stroke:0.15px #000;">Active</span>
<span class="t" style="left:677.55px;top:768px;line-height:20px;height:20px;font-size:12.5px;color:#000;-webkit-text-stroke:0.15px #000;">Salary</span>
<span class="t" style="left:779.90px;top:768px;line-height:20px;height:20px;font-size:12.5px;color:#000;-webkit-text-stroke:0.15px #000;">Bi-Weekly</span>
<span class="t" style="left:953.05px;top:768px;line-height:20px;height:20px;font-size:12.5px;color:#000;letter-spacing:0.278px;-webkit-text-stroke:0.15px #000;">11-23-2008</span>
<div style="position:absolute;left:1192px;top:689px;width:12px;height:99px;background:#fafafa;border-left:1px solid #ededed"></div>
<div style="position:absolute;left:1194px;top:692px;width:7px;height:45px;background:#c1c1c1;border-radius:3.4px"></div>
<div style="position:absolute;left:46px;top:788px;width:1158px;height:12px;background:#fafafa;border-top:1px solid #e9e9e9"></div>
<div style="position:absolute;left:48px;top:792px;width:1026px;height:7px;background:#c1c1c1;border-radius:3.4px"></div>
</div>
</body>
</html>
